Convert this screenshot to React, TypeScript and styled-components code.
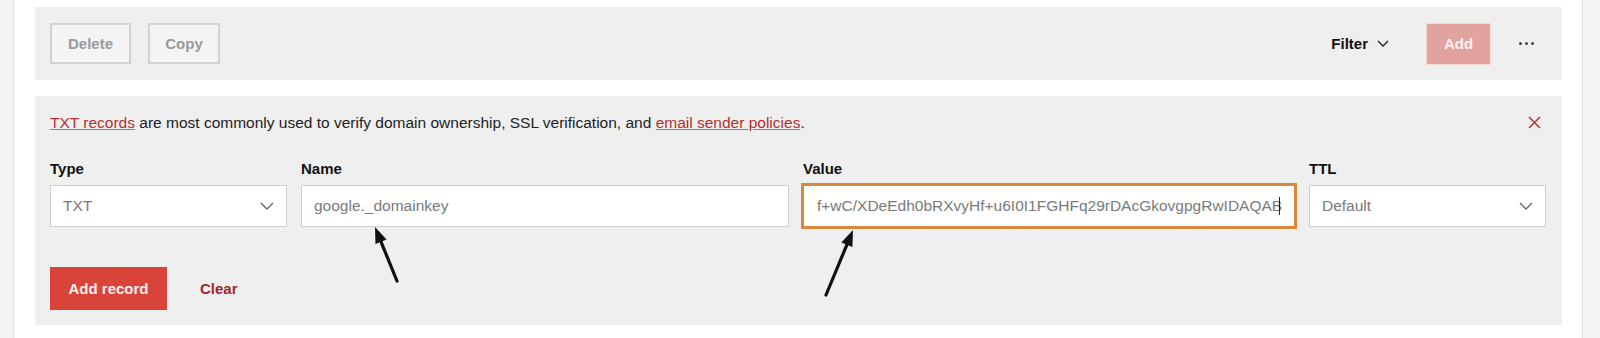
import React from "react";
import styled, { createGlobalStyle } from "styled-components";

const GlobalStyle = createGlobalStyle`
  html, body {
    margin: 0;
    padding: 0;
    background: #f4f4f4;
    font-family: "Liberation Sans", Arial, sans-serif;
  }
`;

const Page = styled.div`
  position: relative;
  margin-left: 13px;
  width: 1570px;
  height: 338px;
  box-sizing: border-box;
  background: #ffffff;
  border-left: 1px solid #e2e2e2;
  border-right: 1px solid #e2e2e2;
  padding: 7px 20px 0 21px;
  display: flex;
  flex-direction: column;
  gap: 16px;
`;

const Toolbar = styled.div`
  height: 73px;
  box-sizing: border-box;
  background: #efefef;
  padding: 0 28px 0 15px;
  display: flex;
  align-items: center;
`;

const GhostButton = styled.button<{ $w: number }>`
  width: ${({ $w }) => $w}px;
  height: 41px;
  margin-right: 17px;
  box-sizing: border-box;
  background: #f4f4f4;
  border: 2px solid #d2d2d2;
  color: #9a9a9a;
  font-family: inherit;
  font-size: 15px;
  font-weight: bold;
  padding: 0;
`;

const Spacer = styled.div`
  flex: 1;
`;

const FilterButton = styled.div`
  display: flex;
  align-items: center;
  gap: 9px;
  font-size: 15px;
  font-weight: bold;
  color: #111;
  margin-right: 37px;
`;

const AddButton = styled.button`
  width: 65px;
  height: 42px;
  box-sizing: border-box;
  background: #e2a29d;
  border: 1px solid #f3d6d3;
  color: #fdf2f1;
  font-family: inherit;
  font-size: 15px;
  font-weight: bold;
  padding: 0;
  margin-right: 28px;
`;

const Dots = styled.div`
  display: flex;
  gap: 3px;
  span {
    width: 3px;
    height: 3px;
    border-radius: 50%;
    background: #444;
  }
`;

const FormPanel = styled.div`
  height: 229px;
  box-sizing: border-box;
  background: #efefef;
  padding: 18px 16px 15px 15px;
  display: flex;
  flex-direction: column;
`;

const InfoRow = styled.div`
  display: flex;
  align-items: center;
  justify-content: space-between;
  font-size: 15.5px;
  line-height: 17px;
  color: #222;
`;

const InfoLink = styled.a`
  color: #b3302c;
  text-decoration: underline;
  text-decoration-color: #c86a66;
`;

const CloseIcon = styled.svg`
  margin-right: 5px;
`;

const Fields = styled.div`
  margin-top: 29px;
  display: grid;
  grid-template-columns: 237px 488px 1fr 237px;
  column-gap: 14px;
`;

const Field = styled.div`
  display: flex;
  flex-direction: column;
  gap: 8px;
`;

const Label = styled.div`
  font-size: 15px;
  line-height: 17px;
  font-weight: bold;
  color: #111;
`;

const Box = styled.div<{ $focus?: boolean }>`
  height: 42px;
  box-sizing: border-box;
  background: #ffffff;
  border: 1px solid ${({ $focus }) => ($focus ? "#d9883a" : "#cfcfcf")};
  box-shadow: ${({ $focus }) => ($focus ? "0 0 0 2px #d9883a" : "none")};
  display: flex;
  align-items: center;
  justify-content: space-between;
  padding: 0 ${({ $focus }) => ($focus ? "13px" : "12px")};
  font-size: 15.5px;
  color: #7a7a7a;
  white-space: nowrap;
  overflow: hidden;
`;

const Caret = styled.span`
  display: inline-block;
  width: 1px;
  height: 18px;
  background: #222;
  margin-left: -3px;
  vertical-align: middle;
`;

const Actions = styled.div`
  margin-top: 40px;
  display: flex;
  align-items: center;
  gap: 33px;
`;

const PrimaryButton = styled.button`
  width: 117px;
  height: 43px;
  background: #d9443a;
  border: none;
  color: #fbeeed;
  font-family: inherit;
  font-size: 15px;
  font-weight: bold;
  padding: 0;
`;

const TextButton = styled.span`
  color: #a1262a;
  font-size: 15px;
  font-weight: bold;
`;

const Annotations = styled.svg`
  position: absolute;
  left: -14px;
  top: 0;
  pointer-events: none;
`;

const Chevron = ({ color = "#666", w = 14, h = 8 }: { color?: string; w?: number; h?: number }) => (
  <svg width={w} height={h} viewBox={`0 0 ${w} ${h}`}>
    <polyline points={`1,1 ${w / 2},${h - 1} ${w - 1},1`} fill="none" stroke={color} strokeWidth="1.4" />
  </svg>
);

const Arrow = ({ x1, y1, x2, y2 }: { x1: number; y1: number; x2: number; y2: number }) => {
  const ang = Math.atan2(y2 - y1, x2 - x1);
  const len = 16;
  const half = 6;
  const bx = x2 - len * Math.cos(ang);
  const by = y2 - len * Math.sin(ang);
  const px = -Math.sin(ang) * half;
  const py = Math.cos(ang) * half;
  return (
    <g>
      <line x1={x1} y1={y1} x2={bx} y2={by} stroke="#111" strokeWidth="3.2" strokeLinecap="round" />
      <polygon points={`${x2},${y2} ${bx + px},${by + py} ${bx - px},${by - py}`} fill="#111" />
    </g>
  );
};

export default function App() {
  return (
    <>
      <GlobalStyle />
      <Page>
        <Toolbar>
          <GhostButton $w={81}>Delete</GhostButton>
          <GhostButton $w={72}>Copy</GhostButton>
          <Spacer />
          <FilterButton>
            Filter
            <Chevron color="#222" w={12} h={7} />
          </FilterButton>
          <AddButton>Add</AddButton>
          <Dots>
            <span />
            <span />
            <span />
          </Dots>
        </Toolbar>

        <FormPanel>
          <InfoRow>
            <div>
              <InfoLink>TXT records</InfoLink> are most commonly used to verify domain ownership, SSL
              verification, and <InfoLink>email sender policies</InfoLink>.
            </div>
            <CloseIcon width="13" height="13" viewBox="0 0 13 13">
              <path d="M1 1 L12 12 M12 1 L1 12" stroke="#b8322e" strokeWidth="1.5" fill="none" />
            </CloseIcon>
          </InfoRow>

          <Fields>
            <Field>
              <Label>Type</Label>
              <Box>
                TXT
                <Chevron />
              </Box>
            </Field>
            <Field>
              <Label>Name</Label>
              <Box>google._domainkey</Box>
            </Field>
            <Field>
              <Label>Value</Label>
              <Box $focus>
                <span>
                  f+wC/XDeEdh0bRXvyHf+u6I0I1FGHFq29rDAcGkovgpgRwIDAQAB
                  <Caret />
                </span>
              </Box>
            </Field>
            <Field>
              <Label>TTL</Label>
              <Box>
                Default
                <Chevron />
              </Box>
            </Field>
          </Fields>

          <Actions>
            <PrimaryButton>Add record</PrimaryButton>
            <TextButton>Clear</TextButton>
          </Actions>
        </FormPanel>

        <Annotations width="1600" height="338">
          <Arrow x1={397} y1={281} x2={375} y2={227} />
          <Arrow x1={826} y1={295} x2={853} y2={230} />
        </Annotations>
      </Page>
    </>
  );
}
